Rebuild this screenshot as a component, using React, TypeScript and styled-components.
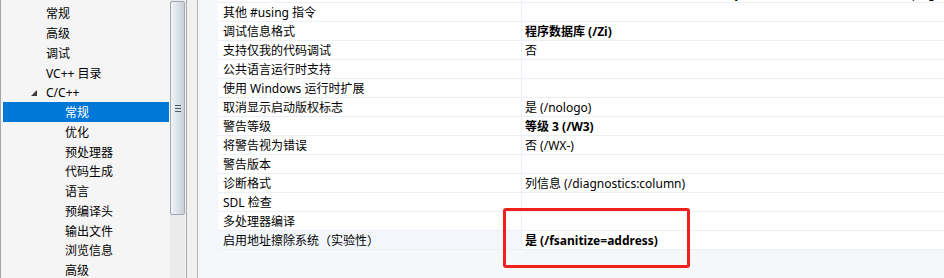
import styled, { createGlobalStyle } from "styled-components";

const GlobalStyle = createGlobalStyle`
  html, body {
    margin: 0;
    padding: 0;
    overflow: hidden;
    background: #ffffff;
  }

  body {
    font-family: "Noto Sans", "Noto Sans CJK SC", sans-serif;
    font-size: 12px;
    color: #000000;
  }
`;

type TreeItem = {
  label: string;
  level: 1 | 2;
  expanded?: boolean;
  selected?: boolean;
};

type Property = {
  name: string;
  note?: string;
  value?: string;
  bold?: boolean;
  highlight?: boolean;
};

const treeItems: TreeItem[] = [
  { label: "常规", level: 1 },
  { label: "高级", level: 1 },
  { label: "调试", level: 1 },
  { label: "VC++ 目录", level: 1 },
  { label: "C/C++", level: 1, expanded: true },
  { label: "常规", level: 2, selected: true },
  { label: "优化", level: 2 },
  { label: "预处理器", level: 2 },
  { label: "代码生成", level: 2 },
  { label: "语言", level: 2 },
  { label: "预编译头", level: 2 },
  { label: "输出文件", level: 2 },
  { label: "浏览信息", level: 2 },
  { label: "高级", level: 2 },
];

const properties: Property[] = [
  { name: "附加包含目录", value: "%(AdditionalIncludeDirectories);$(ProjectDir)include;$(SolutionDir)deps;gtest;(x)" },
  { name: "其他 #using 指令" },
  { name: "调试信息格式", value: "程序数据库 (/Zi)", bold: true },
  { name: "支持仅我的代码调试", value: "否" },
  { name: "公共语言运行时支持" },
  { name: "使用 Windows 运行时扩展" },
  { name: "取消显示启动版权标志", value: "是 (/nologo)" },
  { name: "警告等级", value: "等级 3 (/W3)", bold: true },
  { name: "将警告视为错误", value: "否 (/WX-)" },
  { name: "警告版本" },
  { name: "诊断格式", value: "列信息 (/diagnostics:column)" },
  { name: "SDL 检查" },
  { name: "多处理器编译" },
  { name: "启用地址擦除系统", note: "实验性", value: "是 (/fsanitize=address)", bold: true, highlight: true },
];

const App = () => {
  return (
    <Window>
      <GlobalStyle />
      <TreePane>
        <TreeList>
          {treeItems.map((item, i) => (
            <TreeRow key={i} $level={item.level} $selected={!!item.selected}>
              {item.expanded && (
                <Expander viewBox="0 0 6 6">
                  <polygon points="6,0 6,6 0,6" fill="#3c3c3c" />
                </Expander>
              )}
              {item.label}
            </TreeRow>
          ))}
        </TreeList>
        <ScrollTrack>
          <Thumb>
            <Gripper>
              <span />
              <span />
              <span />
            </Gripper>
          </Thumb>
        </ScrollTrack>
      </TreePane>
      <Splitter />
      <GridPane>
        <Grid>
          {properties.map((p, i) => (
            <PropRow key={i}>
              <NameCell $highlight={!!p.highlight}>
                {p.name}
                {p.note && (
                  <Note>
                    <Paren>（</Paren>
                    {p.note}
                    <Paren>）</Paren>
                  </Note>
                )}
              </NameCell>
              <ValueCell $bold={!!p.bold}>{p.value}</ValueCell>
            </PropRow>
          ))}
        </Grid>
      </GridPane>
      <Annotation />
    </Window>
  );
};

const Window = styled.div`
  position: relative;
  display: flex;
  width: 944px;
  height: 278px;
  overflow: hidden;
`;

const TreePane = styled.div`
  display: flex;
  width: 185px;
  flex-shrink: 0;
  border-left: 1px solid #a7a7a7;
  background: #f5f5f5;
`;

const TreeList = styled.div`
  flex: 1;
  padding-top: 3.5px;
`;

const TreeRow = styled.div<{ $level: 1 | 2; $selected: boolean }>`
  position: relative;
  display: flex;
  align-items: center;
  height: 19.75px;
  margin: 0 1px 0 2px;
  padding-left: ${(p) => (p.$level === 1 ? 43 : 62)}px;
  white-space: nowrap;
  background: ${(p) => (p.$selected ? "#0078d7" : "transparent")};
  color: ${(p) => (p.$selected ? "#ffffff" : "#000000")};
`;

const Expander = styled.svg`
  position: absolute;
  left: 28px;
  top: 7px;
  width: 6px;
  height: 6px;
`;

const ScrollTrack = styled.div`
  display: flex;
  flex-direction: column;
  width: 15px;
  margin-right: 1px;
  background: #ebebeb;
`;

const Thumb = styled.div`
  display: flex;
  align-items: center;
  justify-content: center;
  height: 214px;
  margin-top: 1px;
  box-sizing: border-box;
  border: 1px solid #9fa8b1;
  border-radius: 2px;
  background: linear-gradient(to right, #f1f4f7 0%, #dde4ea 45%, #c9d2da 100%);
`;

const Gripper = styled.div`
  display: flex;
  flex-direction: column;
  gap: 2px;
  width: 6px;

  span {
    height: 1px;
    background: #4f5a64;
  }
`;

const Splitter = styled.div`
  width: 10px;
  flex-shrink: 0;
  border-left: 1px solid #a9a9a9;
  border-right: 1px solid #b4b4b4;
  background: #f0f0f0;
`;

const GridPane = styled.div`
  flex: 1;
  padding-left: 20px;
  background: #f5f7fb;
`;

const Grid = styled.div`
  margin-top: -16px;
  background: #ffffff;
`;

const PropRow = styled.div`
  display: grid;
  grid-template-columns: 303px 1fr;
  height: 19px;
  box-sizing: border-box;
  border-bottom: 1px solid #eceff5;
`;

const NameCell = styled.div<{ $highlight: boolean }>`
  display: flex;
  align-items: center;
  padding-left: 5px;
  white-space: nowrap;
  overflow: hidden;
  background: ${(p) => (p.$highlight ? "#f3f6fb" : "#ffffff")};
`;

const Note = styled.span`
  display: inline-flex;
  align-items: center;
`;

const Paren = styled.span`
  display: inline-block;
  width: 12px;
  text-align: center;
  font-family: "Noto Sans CJK SC", sans-serif;
`;

const ValueCell = styled.div<{ $bold: boolean }>`
  display: flex;
  align-items: center;
  padding-left: 3px;
  border-left: 1px solid #eceff5;
  white-space: nowrap;
  overflow: hidden;
  font-weight: ${(p) => (p.$bold ? 700 : 400)};
`;

const Annotation = styled.div`
  position: absolute;
  left: 503px;
  top: 208px;
  width: 187px;
  height: 60px;
  box-sizing: border-box;
  border: 3px solid #f0201c;
  border-radius: 3px;
  pointer-events: none;
`;

export default App;
